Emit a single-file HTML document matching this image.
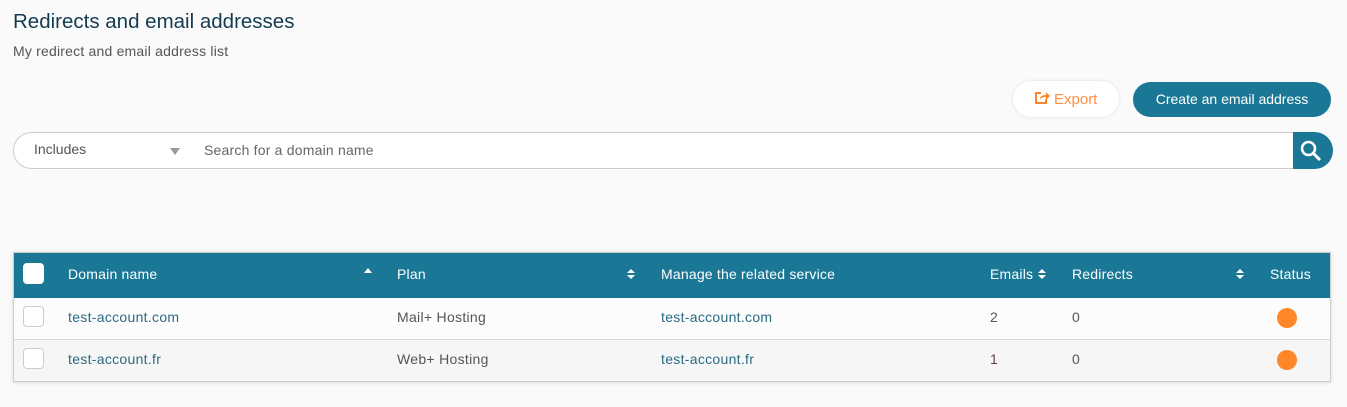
<!DOCTYPE html><html><head><style>
body{margin:0;width:1347px;height:407px;background:#fafafa;font-family:"Liberation Sans",sans-serif;position:relative;overflow:hidden}
.a{position:absolute;white-space:nowrap}
.h{color:#fff;font-size:14px;top:266px;letter-spacing:0.2px}
.c{font-size:14px;color:#555;letter-spacing:0.3px}
.l{color:#2b6a83}
.cb{position:absolute;left:23px;width:19px;height:19px;border:1px solid #ccc;border-radius:4px;background:#fff}
.dot{position:absolute;left:1277px;width:20px;height:20px;border-radius:50%;background:#ff8629}
.s{position:absolute;width:0;height:0;border-left:4px solid transparent;border-right:4px solid transparent}
</style></head><body>
<div class="a" style="left:13px;top:10px;font-size:20.5px;color:#143b52">Redirects and email addresses</div>
<div class="a" style="left:13px;top:43px;font-size:14px;color:#555;letter-spacing:0.2px">My redirect and email address list</div>
<div class="a" style="left:1013px;top:81px;width:106px;height:36px;border-radius:18px;background:#fff;box-shadow:0 0 3px #ddd"></div>
<svg class="a" style="left:1034px;top:91px" width="16" height="14" viewBox="0 0 16 14"><path d="M7 2H2v10h10V8" fill="none" stroke="#ff8629" stroke-width="2"/><path d="M6 9C6 5 9 4 12 4V1l4 4-4 4V6C9 6 7 7 6 9z" fill="#ff8629"/></svg>
<div class="a" style="left:1054px;top:91px;font-size:15px;color:#ff8f45">Export</div>
<div class="a" style="left:1133px;top:82px;width:198px;height:35px;border-radius:18px;background:#1a7896;color:#fff;font-size:14px;text-align:center;line-height:35px">Create an email address</div>
<div class="a" style="left:13px;top:132px;width:1290px;height:35px;border:1px solid #ccc;border-radius:19px 0 0 19px;background:#fff"></div>
<div class="a" style="left:34px;top:141px;font-size:14px;color:#555">Includes</div>
<div class="s" style="left:170px;top:148px;border-top:7px solid #999;border-left-width:5px;border-right-width:5px"></div>
<div class="a" style="left:204px;top:142px;font-size:14px;color:#666;letter-spacing:0.2px">Search for a domain name</div>
<div class="a" style="left:1293px;top:132px;width:40px;height:37px;background:#1a7896;border-radius:0 19px 19px 0"></div>
<svg class="a" style="left:1300px;top:140px" width="22" height="22" viewBox="0 0 22 22"><circle cx="8.5" cy="8.5" r="6.5" fill="none" stroke="#fff" stroke-width="2.5"/><path d="M13 13l7 7" stroke="#fff" stroke-width="3"/></svg>
<div class="a" style="left:13px;top:252px;width:1316px;height:128px;border:1px solid #ccc;background:#fcfcfc;box-shadow:0 1px 4px #ddd"></div>
<div class="a" style="left:14px;top:253px;width:1316px;height:45px;background:#1a7896"></div>
<div class="a" style="left:14px;top:339px;width:1316px;height:41px;background:#f6f6f6;border-top:1px solid #d5dadd"></div>
<div class="cb" style="top:263px;border-color:#fff"></div>
<div class="a h" style="left:68px">Domain name</div>
<div class="s" style="left:364px;top:268px;border-bottom:5px solid #fff"></div>
<div class="a h" style="left:397px">Plan</div>
<div class="s" style="left:627px;top:269px;border-bottom:4px solid #fff"></div><div class="s" style="left:627px;top:275px;border-top:4px solid #fff"></div>
<div class="a h" style="left:661px">Manage the related service</div>
<div class="a h" style="left:990px">Emails</div>
<div class="s" style="left:1038px;top:269px;border-bottom:4px solid #fff"></div><div class="s" style="left:1038px;top:275px;border-top:4px solid #fff"></div>
<div class="a h" style="left:1072px">Redirects</div>
<div class="s" style="left:1236px;top:269px;border-bottom:4px solid #fff"></div><div class="s" style="left:1236px;top:275px;border-top:4px solid #fff"></div>
<div class="a h" style="left:1270px">Status</div>
<div class="cb" style="top:306px"></div>
<div class="a c l" style="left:68px;top:309px">test-account.com</div>
<div class="a c" style="left:397px;top:309px">Mail+ Hosting</div>
<div class="a c l" style="left:661px;top:309px">test-account.com</div>
<div class="a c" style="left:990px;top:309px">2</div>
<div class="a c" style="left:1072px;top:309px">0</div>
<div class="dot" style="top:308px"></div>
<div class="cb" style="top:348px"></div>
<div class="a c l" style="left:68px;top:351px">test-account.fr</div>
<div class="a c" style="left:397px;top:351px">Web+ Hosting</div>
<div class="a c l" style="left:661px;top:351px">test-account.fr</div>
<div class="a c" style="left:990px;top:351px;color:#6a3a5a">1</div>
<div class="a c" style="left:1072px;top:351px">0</div>
<div class="dot" style="top:350px"></div>
</body></html>
